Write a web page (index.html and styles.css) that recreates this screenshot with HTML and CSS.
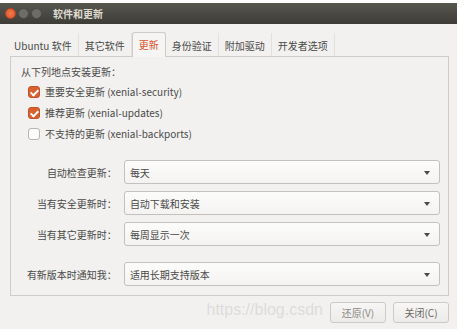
FILE: index.html
```html
<!DOCTYPE html>
<html lang="zh-CN">
<head>
    <meta charset="UTF-8">
    <title>软件和更新</title>
    <link rel="stylesheet" href="styles.css">
</head>
<body>
    <div class="janela">
        <div class="titulo">
            <span class="bolinha fechar"></span>
            <span class="bolinha"></span>
            <span class="bolinha"></span>
            <span class="nome">软件和更新</span>
        </div>
        <div class="corpo">
            <div class="abas">
                <span class="aba">Ubuntu 软件</span>
                <span class="aba">其它软件</span>
                <span class="aba ativa">更新</span>
                <span class="aba">身份验证</span>
                <span class="aba">附加驱动</span>
                <span class="aba">开发者选项</span>
            </div>
            <div class="quadro">
                <p class="secao">从下列地点安装更新：</p>
                <label class="opcao"><span class="caixa marcada"></span>重要安全更新 (xenial-security)</label>
                <label class="opcao"><span class="caixa marcada"></span>推荐更新 (xenial-updates)</label>
                <label class="opcao"><span class="caixa"></span>不支持的更新 (xenial-backports)</label>

                <div class="linhas">
                    <div class="linha">
                        <span class="rotulo">自动检查更新：</span>
                        <div class="combo">每天<span class="seta"></span></div>
                    </div>
                    <div class="linha">
                        <span class="rotulo">当有安全更新时：</span>
                        <div class="combo">自动下载和安装<span class="seta"></span></div>
                    </div>
                    <div class="linha">
                        <span class="rotulo">当有其它更新时：</span>
                        <div class="combo">每周显示一次<span class="seta"></span></div>
                    </div>
                    <div class="linha separada">
                        <span class="rotulo">有新版本时通知我：</span>
                        <div class="combo">适用长期支持版本<span class="seta"></span></div>
                    </div>
                </div>
            </div>
            <div class="acoes">
                <span class="marca">https://blog.csdn</span>
                <button class="botao">还原(V)</button>
                <button class="botao">关闭(C)</button>
            </div>
        </div>
    </div>
</body>
</html>
```

FILE: styles.css
```css
* {
    margin: 0;
    padding: 0;
    box-sizing: border-box;
}
body {
    background-color: #ffffff;
    font-family: "Noto Sans CJK SC", "Noto Sans", sans-serif;
    font-size: 10px;
    color: #4a4a48;
}
.janela {
    width: 457px;
    height: 326px;
    margin-top: 3px;
    background-color: #f2f1f0;
    display: flex;
    flex-direction: column;
}
.titulo {
    height: 21px;
    background-image: linear-gradient(#57564f, #3d3c37);
    display: flex;
    align-items: center;
    padding-left: 5px;
    gap: 2px;
}
.bolinha {
    width: 11px;
    height: 11px;
    border-radius: 50%;
    background-color: #6d6c66;
    border: 1px solid #4a4944;
}
.bolinha.fechar {
    background-image: radial-gradient(#f07a4f, #e0522a);
    border-color: #b8421f;
}
.nome {
    margin-left: 9px;
    color: #dfdbd2;
    font-weight: bold;
    font-size: 10px;
}
.corpo {
    flex: 1;
    padding: 9px 8px 0 10px;
    display: flex;
    flex-direction: column;
}
.abas {
    display: flex;
    height: 23px;
    align-items: stretch;
}
.aba {
    padding: 5px 6px 0 6px;
    border-right: 1px solid #e2e0dd;
    color: #4a4a48;
    white-space: nowrap;
}
.aba:first-child {
    padding-left: 4px;
}
.aba.ativa {
    color: #d8562b;
    background-color: #f6f5f4;
    border: 1px solid #cfccc8;
    border-bottom: none;
    border-radius: 3px 3px 0 0;
    padding-top: 4px;
    margin-top: -1px;
    margin-bottom: -1px;
    position: relative;
}
.quadro {
    width: 439px;
    height: 240px;
    border: 1px solid #cfccc8;
    background-color: #f2f1f0;
    padding: 6px 8px 0 10px;
}
.secao {
    line-height: 18px;
}
.opcao {
    display: flex;
    align-items: center;
    height: 21px;
    padding-left: 7px;
    gap: 5px;
}
.caixa {
    width: 12px;
    height: 12px;
    border: 1px solid #b8b5b0;
    border-radius: 3px;
    background-color: #fbfbfa;
    position: relative;
}
.caixa.marcada {
    background-color: #d9602f;
    border-color: #c2512a;
}
.caixa.marcada::after {
    content: "";
    position: absolute;
    left: 3px;
    top: 1px;
    width: 3px;
    height: 6px;
    border: solid #ffffff;
    border-width: 0 2px 2px 0;
    transform: rotate(45deg);
}
.linhas {
    margin-top: 16px;
    display: flex;
    flex-direction: column;
    gap: 7px;
}
.linha {
    display: flex;
    align-items: center;
}
.linha.separada {
    margin-top: 9px;
}
.rotulo {
    width: 98px;
    text-align: right;
    white-space: nowrap;
}
.combo {
    margin-left: 7px;
    width: 323px;
    height: 24px;
    background-image: linear-gradient(#fcfcfb, #f4f3f2);
    border: 1px solid #c4c1bc;
    border-radius: 3px;
    display: flex;
    align-items: center;
    padding-left: 5px;
    position: relative;
}
.seta {
    position: absolute;
    right: 9px;
    top: 10px;
    border-left: 3px solid transparent;
    border-right: 3px solid transparent;
    border-top: 4px solid #4a4a48;
}
.acoes {
    display: flex;
    justify-content: flex-end;
    gap: 7px;
    padding-top: 6px;
    position: relative;
}
.marca {
    position: absolute;
    right: 126px;
    top: 5px;
    font-family: "Liberation Sans", sans-serif;
    font-size: 16px;
    color: rgba(200, 198, 195, 0.5);
    white-space: nowrap;
}
.botao {
    position: relative;
    height: 21px;
    width: 56px;
    font-family: "Noto Sans CJK SC", sans-serif;
    font-size: 10px;
    color: #8a8885;
    background-image: linear-gradient(#f7f6f5, #edebe9);
    border: 1px solid #cdcac6;
    border-radius: 3px;
}
.botao:last-child {
    color: #6b6966;
}
```
